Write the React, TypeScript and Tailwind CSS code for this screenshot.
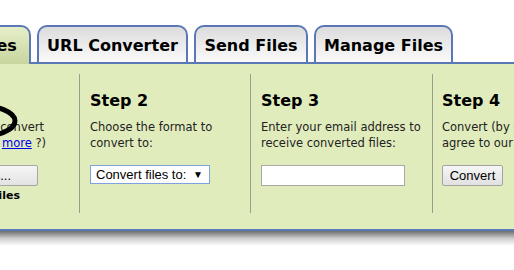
import React from "react";

const font = { fontFamily: '"DejaVu Sans", Verdana, sans-serif' };
const arial = { fontFamily: '"Liberation Sans", Arial, sans-serif' };

export default function App() {
  return (
    <div className="relative w-[514px] h-[270px] overflow-hidden bg-white" style={font}>
      {/* Tabs */}
      <div className="flex items-end gap-[6px] pt-[25px] relative z-10">
        <div className="-ml-[116px] w-[147px] h-[39px] -mb-[2px] border-2 border-b-0 border-[#5b78b6] rounded-t-[10px] bg-gradient-to-b from-[#e6eec9] to-[#c8d59e] flex items-center justify-center pt-[1px] text-[16px] font-bold text-black whitespace-nowrap">
          Convert Files
        </div>
        <div className="w-[151px] h-[37px] border-2 border-b-0 border-[#5b78b6] rounded-t-[10px] bg-gradient-to-b from-[#dcdcdc] to-[#fafafa] flex items-center justify-center pt-[3px] text-[16px] font-bold text-black whitespace-nowrap">
          URL Converter
        </div>
        <div className="w-[114px] h-[37px] border-2 border-b-0 border-[#5b78b6] rounded-t-[10px] bg-gradient-to-b from-[#dcdcdc] to-[#fafafa] flex items-center justify-center pt-[3px] text-[16px] font-bold text-black whitespace-nowrap">
          Send Files
        </div>
        <div className="w-[139px] h-[37px] border-2 border-b-0 border-[#5b78b6] rounded-t-[10px] bg-gradient-to-b from-[#dcdcdc] to-[#fafafa] flex items-center justify-center pt-[3px] text-[16px] font-bold text-black whitespace-nowrap">
          Manage Files
        </div>
      </div>

      {/* Panel */}
      <div className="bg-[#e1ecbd] border-t-2 border-b-2 border-[#5b78b6] pt-[10px] h-[169px] flex text-[11.5px] leading-[16px] text-[#222]">
        {/* Column 1 (partially visible) */}
        <div className="w-[79px] shrink-0 h-[139px] pt-[17px]">
          <div className="h-[20px]" />
          <div className="mt-[8px] w-[46px] flex flex-col items-end">
            <div className="whitespace-nowrap mr-[2px]">Select files to convert</div>
            <div className="whitespace-nowrap">
              (or learn <span className="text-[#0000ee] underline">more</span> ?)
            </div>
          </div>
          <div className="mt-[14px] w-[38px] flex flex-col items-end">
            <div
              className="shrink-0 w-[120px] h-[21px] border border-[#a6a6a6] rounded-[2px] bg-gradient-to-b from-[#f6f6f6] to-[#e3e3e3] flex items-center justify-end pr-[26px] text-[13px] text-black whitespace-nowrap"
              style={arial}
            >
              Choose Files...
            </div>
          </div>
          <div className="mt-[3px] w-[20px] flex flex-col items-end">
            <div className="whitespace-nowrap text-[11px] leading-[14px] font-bold text-black">
              or drag &amp; drop files
            </div>
          </div>
        </div>

        {/* Step 2 */}
        <div className="w-[171px] shrink-0 h-[139px] border-l border-[#9b9e8c] pl-[10px] pt-[17px]">
          <div className="text-[16px] leading-[20px] font-bold text-black">Step 2</div>
          <div className="mt-[8px] whitespace-nowrap">
            Choose the format to
            <br />
            convert to:
          </div>
          <div
            className="mt-[14px] w-[120px] h-[19px] border border-[#7ea3dc] bg-white flex items-center justify-between pl-[5px] pr-[6px] text-[13px] text-black"
            style={arial}
          >
            <span>Convert files to:</span>
            <span className="text-[10px]">▼</span>
          </div>
        </div>

        {/* Step 3 */}
        <div className="w-[182px] shrink-0 h-[139px] border-l border-[#9b9e8c] pl-[10px] pt-[17px]">
          <div className="text-[16px] leading-[20px] font-bold text-black">Step 3</div>
          <div className="mt-[8px] whitespace-nowrap">
            Enter your email address to
            <br />
            receive converted files:
          </div>
          <div className="mt-[14px] w-[144px] h-[21px] border border-[#a9a9a9] bg-white" />
        </div>

        {/* Step 4 */}
        <div className="w-[200px] shrink-0 h-[139px] border-l border-[#9b9e8c] pl-[9px] pt-[17px]">
          <div className="text-[16px] leading-[20px] font-bold text-black">Step 4</div>
          <div className="mt-[8px] whitespace-nowrap">
            Convert (by clicking you
            <br />
            agree to our terms)
          </div>
          <div
            className="mt-[14px] w-[61px] h-[21px] border border-[#a3a3a3] rounded-[2px] bg-gradient-to-b from-[#f6f6f6] to-[#e1e1e1] flex items-center justify-center text-[13px] text-black"
            style={arial}
          >
            Convert
          </div>
        </div>
      </div>

      {/* Shadow under panel */}
      <div className="h-[15px] bg-gradient-to-b from-[#6f6f6f] via-[#cfcfcf] to-white" />

      {/* Hand-drawn annotation ellipse */}
      <svg className="absolute left-0 top-0 pointer-events-none" width="60" height="160" viewBox="0 0 60 160">
        <ellipse cx="-24" cy="121" rx="39" ry="16" fill="none" stroke="#000" strokeWidth="5" />
      </svg>
    </div>
  );
}
